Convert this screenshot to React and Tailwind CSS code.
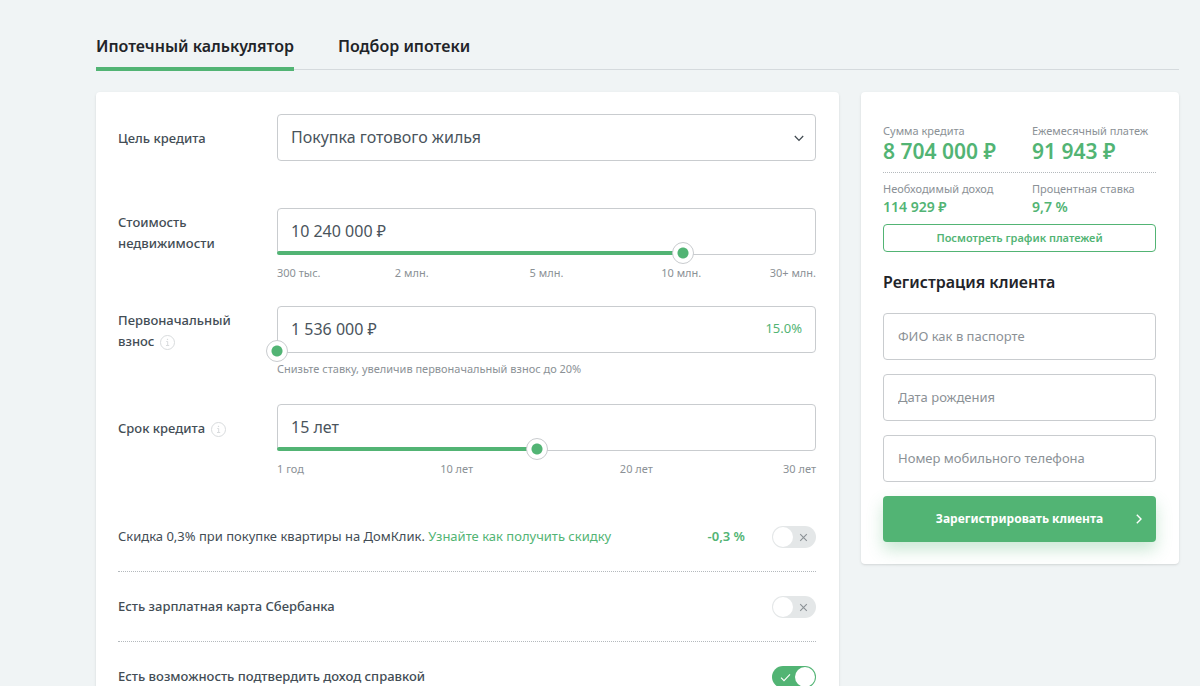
import { useState } from "react";

const fieldBox =
  "w-full h-[47px] rounded border border-[#c9cccf] bg-white px-[13px] pb-0.5 text-[16px] text-[#4a545c] outline-none focus:border-[#52b474]";

function InfoButton({ label }) {
  return (
    <button type="button" aria-label={label} className="ml-1.5 inline-flex align-middle text-[#d8dbdd]">
      <svg width="15" height="15" viewBox="0 0 15 15" fill="none" stroke="currentColor" aria-hidden="true">
        <circle cx="7.5" cy="7.5" r="7" />
        <path d="M6.3 6.5h1.4v4M6 10.5h3.2" />
        <path d="M7.5 3.8v1.2" strokeWidth="1.2" />
      </svg>
    </button>
  );
}

function FieldRow({ id, label, info, children }) {
  return (
    <div className="flex items-start">
      <div className="flex min-h-[47px] w-[159px] shrink-0 items-center pt-0.5 text-[13px] leading-[21px] font-medium text-[#434d55]">
        <div className="max-w-[120px]">
          <label htmlFor={id}>{label}</label>
          {info && <InfoButton label={info} />}
        </div>
      </div>
      <div className="min-w-0 flex-1">{children}</div>
    </div>
  );
}

function SliderField({ id, value, suffix, start, sliderLabel }) {
  const [position, setPosition] = useState(start);
  return (
    <div className="relative">
      <input id={id} type="text" defaultValue={value} className={fieldBox} />
      {suffix && (
        <span className="pointer-events-none absolute top-0 right-[14px] flex h-[45px] items-center text-[13px] text-[#52b474]">
          {suffix}
        </span>
      )}
      <div
        className="pointer-events-none absolute bottom-0 left-0 h-1 rounded-l bg-[#52b474]"
        style={{ width: `${position / 10}%` }}
      />
      <input
        type="range"
        min="0"
        max="1000"
        value={position}
        aria-label={sliderLabel}
        onChange={(e) => setPosition(Number(e.target.value))}
        className="absolute -right-[11px] -bottom-[9px] -left-[11px] h-[22px] w-[calc(100%+22px)] cursor-pointer appearance-none bg-transparent outline-none [&::-webkit-slider-thumb]:h-[22px] [&::-webkit-slider-thumb]:w-[22px] [&::-webkit-slider-thumb]:appearance-none [&::-webkit-slider-thumb]:rounded-full [&::-webkit-slider-thumb]:border [&::-webkit-slider-thumb]:border-[#c9cccf] [&::-webkit-slider-thumb]:bg-[radial-gradient(circle,#52b474_5px,#ffffff_6px)]"
      />
    </div>
  );
}

function Toggle({ id, defaultChecked }) {
  return (
    <span className="relative inline-flex h-[22px] w-11 shrink-0">
      <input
        id={id}
        type="checkbox"
        role="switch"
        defaultChecked={defaultChecked}
        className="peer h-[22px] w-11 cursor-pointer appearance-none rounded-full bg-[#e4e7e8] checked:bg-[#52b474]"
      />
      <span className="pointer-events-none absolute top-px left-px h-5 w-5 rounded-full bg-white peer-checked:left-[23px]" />
      <svg
        className="pointer-events-none absolute top-[7px] right-2 text-[#8b9196] peer-checked:hidden"
        width="9" height="9" viewBox="0 0 9 9" fill="none" stroke="currentColor" strokeWidth="1.1" aria-hidden="true"
      >
        <path d="M1.2 1.2l6.6 6.6M7.8 1.2L1.2 7.8" />
      </svg>
      <svg
        className="pointer-events-none absolute top-[7px] left-2 hidden text-white peer-checked:block"
        width="11" height="9" viewBox="0 0 11 9" fill="none" stroke="currentColor" strokeWidth="1.1" aria-hidden="true"
      >
        <path d="M1 4.6l3 3L10 1.4" />
      </svg>
    </span>
  );
}

function Stat({ label, value, large }) {
  return (
    <div>
      <dt className="text-[11px] leading-4 text-[#8b9196]">{label}</dt>
      <dd className={large ? "text-[21px] leading-6 font-semibold text-[#52b474]" : "text-[14px] leading-5 font-semibold text-[#52b474]"}>
        {value}
      </dd>
    </div>
  );
}

export default function App() {
  const [tab, setTab] = useState(0);
  const tabs = ["Ипотечный калькулятор", "Подбор ипотеки"];
  const clientFields = ["ФИО как в паспорте", "Дата рождения", "Номер мобильного телефона"];

  return (
    <div className="min-h-screen bg-[#f0f4f5] pr-[21px] pl-24 font-['Noto_Sans','Open_Sans',sans-serif] text-[#434d55]">
      <nav className="flex h-[70px] items-end gap-11 border-b border-[#d5dadd]">
        {tabs.map((name, i) => (
          <button
            key={name}
            type="button"
            onClick={() => setTab(i)}
            className={`-mb-0.5 border-b-4 pb-[9px] text-[16px] leading-6 font-semibold text-[#1f2429] ${tab === i ? "border-[#52b474]" : "border-transparent"}`}
          >
            {name}
          </button>
        ))}
      </nav>

      <div className="flex items-start gap-[22px] pt-[22px]">
        <main className="min-w-0 flex-1 rounded bg-white pt-[22px] pr-[23px] pl-[22px] shadow-sm">
          <FieldRow id="purpose" label="Цель кредита">
            <div className="relative">
              <select id="purpose" className={`${fieldBox} appearance-none`}>
                <option>Покупка готового жилья</option>
              </select>
              <svg
                className="pointer-events-none absolute top-[21px] right-3"
                width="10" height="7" viewBox="0 0 10 7" fill="none" stroke="#3f484f" strokeWidth="1.2" aria-hidden="true"
              >
                <path d="M0.8 1L5 5.4 9.2 1" />
              </svg>
            </div>
          </FieldRow>

          <div className="mt-[47px] grid auto-rows-[98px]">
            <FieldRow id="price" label="Стоимость недвижимости">
              <SliderField id="price" value="10 240 000 ₽" start={753} sliderLabel="Стоимость недвижимости" />
              <div className="mt-[10px] grid grid-cols-8 text-[11px] leading-4 whitespace-nowrap text-[#8b9196]">
                <span>300 тыс.</span>
                <span className="col-span-2 text-center">2 млн.</span>
                <span className="col-span-2 text-center">5 млн.</span>
                <span className="col-span-2 text-center">10 млн.</span>
                <span className="text-right">30+ млн.</span>
              </div>
            </FieldRow>

            <FieldRow id="deposit" label="Первоначальный взнос" info="О первоначальном взносе">
              <SliderField id="deposit" value="1 536 000 ₽" suffix="15.0%" start={0} sliderLabel="Первоначальный взнос" />
              <p className="mt-2 text-[11px] leading-4 text-[#8b9196]">
                Снизьте ставку, увеличив первоначальный взнос до 20%
              </p>
            </FieldRow>

            <FieldRow id="term" label="Срок кредита" info="О сроке кредита">
              <SliderField id="term" value="15 лет" start={483} sliderLabel="Срок кредита" />
              <div className="mt-[10px] grid grid-cols-6 text-[11px] leading-4 whitespace-nowrap text-[#8b9196]">
                <span>1 год</span>
                <span className="col-span-2 text-center">10 лет</span>
                <span className="col-span-2 text-center">20 лет</span>
                <span className="text-right">30 лет</span>
              </div>
            </FieldRow>
          </div>

          <div className="divide-y divide-dotted divide-[#b4b9bd] text-[13px]">
            <div className="flex h-[70px] items-center">
              <p className="flex-1">
                <label htmlFor="discount">Скидка 0,3% при покупке квартиры на ДомКлик.</label>{" "}
                <a href="#discount" className="text-[#52b474]">Узнайте как получить скидку</a>
              </p>
              <span className="mr-[27px] font-semibold text-[#52b474]">-0,3 %</span>
              <Toggle id="discount" />
            </div>
            <div className="flex h-[70px] items-center justify-between">
              <label htmlFor="salary" className="font-medium">Есть зарплатная карта Сбербанка</label>
              <Toggle id="salary" />
            </div>
            <div className="flex h-[70px] items-center justify-between">
              <label htmlFor="income" className="font-medium">Есть возможность подтвердить доход справкой</label>
              <Toggle id="income" defaultChecked />
            </div>
          </div>
        </main>

        <aside className="w-[318px] shrink-0 rounded bg-white pt-[31px] pr-[23px] pb-[22px] pl-[22px] shadow-sm">
          <dl className="grid grid-cols-[149px_1fr] border-b border-dotted border-[#b4b9bd] pb-[9px] whitespace-nowrap">
            <Stat large label="Сумма кредита" value="8 704 000 ₽" />
            <Stat large label="Ежемесячный платеж" value="91 943 ₽" />
          </dl>
          <dl className="grid grid-cols-[149px_1fr] pt-2 whitespace-nowrap">
            <Stat label="Необходимый доход" value="114 929 ₽" />
            <Stat label="Процентная ставка" value="9,7 %" />
          </dl>
          <button type="button" className="mt-[7px] h-7 w-full rounded border border-[#52b474] text-[11px] font-semibold text-[#52b474]">
            Посмотреть график платежей
          </button>
          <h2 className="mt-[18px] text-[16px] leading-6 font-semibold text-[#1f2429]">Регистрация клиента</h2>
          <form className="mt-[19px] flex flex-col gap-[14px]">
            {clientFields.map((name) => (
              <input
                key={name}
                type="text"
                aria-label={name}
                placeholder={name}
                className="h-[47px] w-full rounded border border-[#c9cccf] px-[14px] pb-0.5 text-[13px] outline-none placeholder:text-[#8b9196] focus:border-[#52b474]"
              />
            ))}
            <button
              type="button"
              className="flex h-[46px] items-center rounded bg-[#52b474] pr-[14px] pl-5 text-[12px] font-bold text-white shadow-[0_8px_16px_rgba(82,180,116,0.3)]"
            >
              <span className="flex-1">Зарегистрировать клиента</span>
              <svg width="6" height="10" viewBox="0 0 6 10" fill="none" stroke="currentColor" strokeWidth="1.4" aria-hidden="true">
                <path d="M0.8 0.8L5 5 0.8 9.2" />
              </svg>
            </button>
          </form>
        </aside>
      </div>
    </div>
  );
}
